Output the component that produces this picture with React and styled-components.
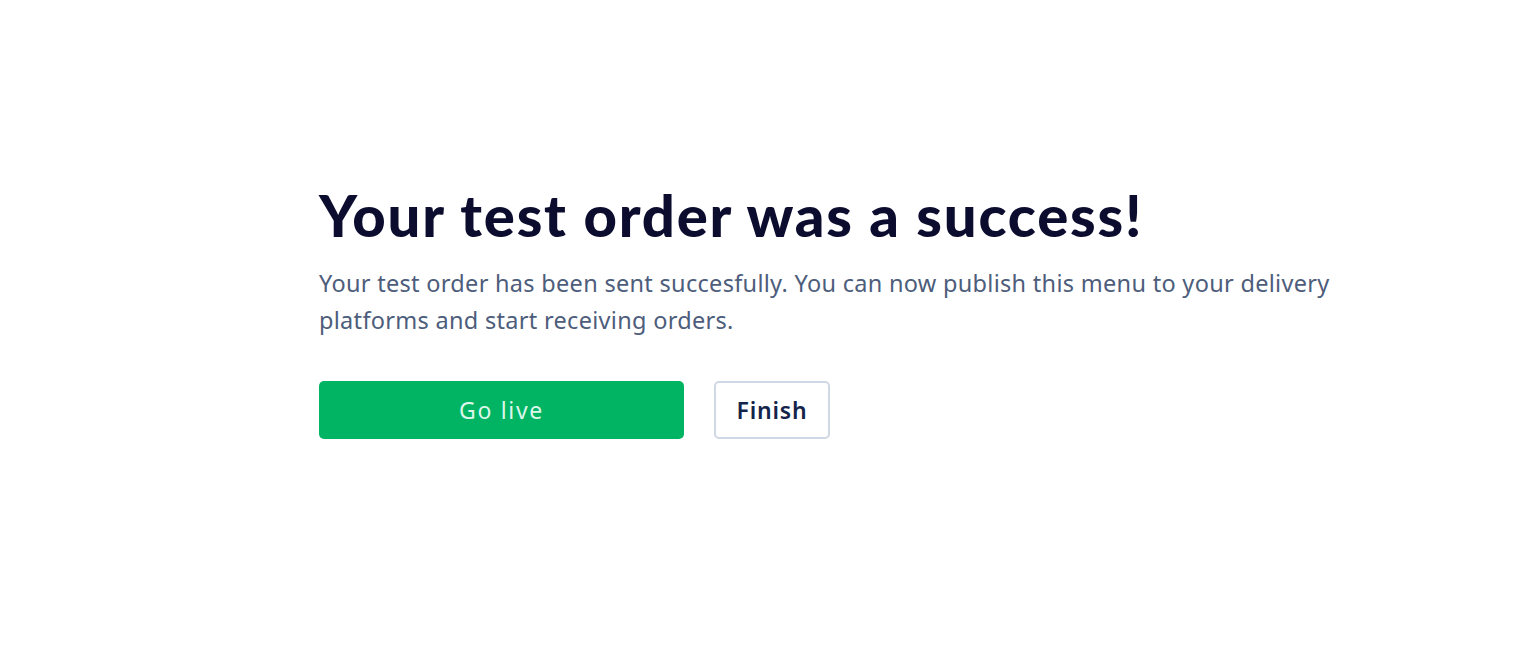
import React from "react";
import styled, { createGlobalStyle } from "styled-components";

const Global = createGlobalStyle`
  html, body { margin: 0; padding: 0; background: #fff; }
  body { font-family: "Noto Sans", sans-serif; }
`;

const Page = styled.div`
  width: 1520px;
  height: 652px;
  box-sizing: border-box;
  padding: 180px 0 0 319px;
`;

const Title = styled.h1`
  margin: 0;
  font-family: "Lato", sans-serif;
  font-weight: 900;
  font-size: 58px;
  line-height: 70px;
  letter-spacing: 1.8px;
  color: #0b0c2e;
`;

const Text = styled.p`
  margin: 15px 0 0;
  font-family: "Noto Sans", sans-serif;
  font-size: 23.5px;
  line-height: 37px;
  letter-spacing: 0.3px;
  color: #4d5d7b;
  width: 1080px;
`;

const Actions = styled.div`
  display: flex;
  gap: 30px;
  margin-top: 42px;
`;

const Button = styled.button`
  height: 58px;
  box-sizing: border-box;
  border-radius: 5px;
  font-family: "Noto Sans", sans-serif;
  font-size: 23px;
  cursor: pointer;
  letter-spacing: ${(p) => (p.$primary ? "1.7px" : "0.8px")};
  width: ${(p) => (p.$primary ? "365px" : "116px")};
  background: ${(p) => (p.$primary ? "#00b464" : "#fff")};
  color: ${(p) => (p.$primary ? "#dcf7ea" : "#14234a")};
  font-weight: ${(p) => (p.$primary ? 400 : 600)};
  border: ${(p) => (p.$primary ? "none" : "2px solid #cfd8e4")};
`;

export default function App() {
  return (
    <>
      <Global />
      <Page>
        <Title>Your test order was a success!</Title>
        <Text>
          Your test order has been sent succesfully. You can now publish this menu to your delivery platforms and start receiving orders.
        </Text>
        <Actions>
          <Button $primary>Go live</Button>
          <Button>Finish</Button>
        </Actions>
      </Page>
    </>
  );
}
